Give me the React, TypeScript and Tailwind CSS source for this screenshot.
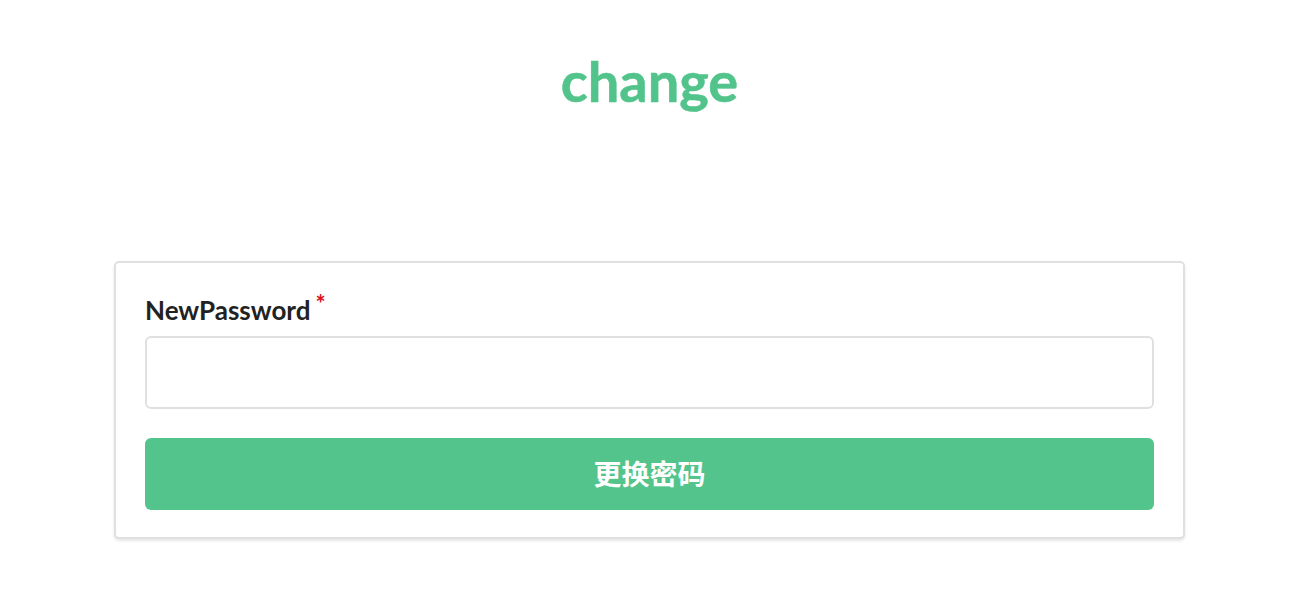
export default function App() {
  return (
    <div className="min-h-[610px] bg-white font-['Lato','Noto_Sans_CJK_SC',sans-serif]">
      <div className="ml-[114px] w-[1071px] flex flex-col">
        <h1 className="pt-[47px] h-[261px] text-center text-[56px] leading-[68px] font-bold text-[#52c48b] [-webkit-text-stroke:0.5px_#52c48b]">change</h1>
        <div className="rounded-[5px] border-2 border-[#e0e0e0] bg-white px-[29px] pt-[29px] pb-[27px] shadow-[0_2px_3px_rgba(0,0,0,0.1)]">
          <label className="flex items-start text-[26px] leading-[36px] font-bold text-[#222222]">
            NewPassword<span className="ml-[5px] mt-[0px] text-[24px] leading-[24px] text-[#e0101b]">*</span>
          </label>
          <input
            type="password"
            className="mt-[8px] block h-[73px] w-full rounded-[6px] border-2 border-[#e0e0e0] px-4 outline-none"
          />
          <button className="mt-[29px] flex h-[72px] w-full items-center justify-center rounded-[6px] bg-[#53c48b] text-[28px] font-bold text-white">
            更换密码
          </button>
        </div>
      </div>
    </div>
  );
}
